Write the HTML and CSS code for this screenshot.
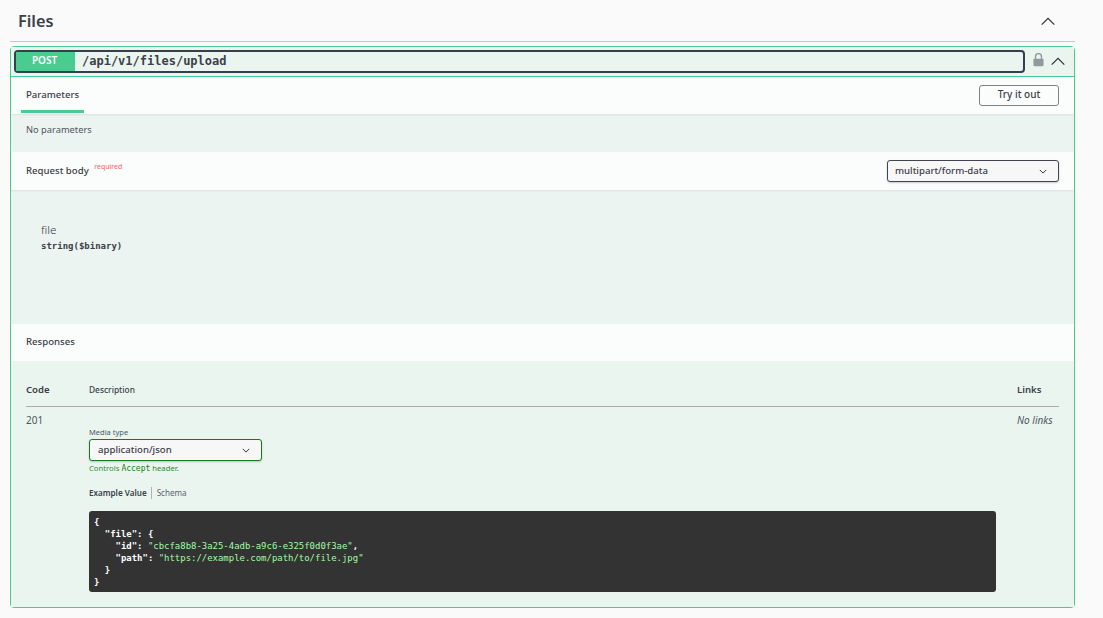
FILE: index.html
```html
<!DOCTYPE html>
<html lang="en">
<head>
<meta charset="utf-8">
<title>Files</title>
<link rel="stylesheet" href="styles.css">
</head>
<body>
<main class="page">
  <header class="tag">
    <h3 class="tag-title">Files</h3>
    <svg class="chev chev-tag" viewBox="0 0 20 20"><path d="M3 14 L10 7 L17 14"/></svg>
  </header>
  <section class="op">
    <div class="summary">
      <div class="summary-btn">
        <span class="method">POST</span>
        <span class="path">/api/v1/files/upload</span>
      </div>
      <svg class="lock" viewBox="0 0 14 18"><path class="lock-body" d="M1.5 7.5h11a1 1 0 0 1 1 1v7a1.6 1.6 0 0 1-1.6 1.6H2.1A1.6 1.6 0 0 1 .5 15.500v-7a1 1 0 0 1 1-1z"/><path class="lock-shackle" d="M3.200 8V4.600a3.800 3.800 0 0 1 7.600 0V8"/></svg>
      <svg class="chev chev-op" viewBox="0 0 20 20"><path d="M3 14 L10 7 L17 14"/></svg>
    </div>
    <div class="bar bar-params">
      <div class="tab">Parameters</div>
      <button class="try">Try it out</button>
    </div>
    <div class="no-params">No parameters</div>
    <div class="bar bar-body">
      <div class="body-label">Request body <sup class="req">required</sup></div>
      <div class="select select-body">multipart/form-data
        <svg class="sel-chev" viewBox="0 0 10 6"><path d="M1 1 L5 5 L9 1"/></svg>
      </div>
    </div>
    <div class="body-content">
      <div class="prop-name">file</div>
      <div class="prop-type">string($binary)</div>
    </div>
    <div class="bar bar-resp">Responses</div>
    <div class="responses">
      <div class="resp-head">
        <div class="col-code head-strong">Code</div>
        <div class="col-desc head-small">Description</div>
        <div class="col-links head-strong">Links</div>
      </div>
      <div class="resp-row">
        <div class="col-code code-val">201</div>
        <div class="col-desc">
          <div class="media-label">Media type</div>
          <div class="select select-media">application/json
            <svg class="sel-chev" viewBox="0 0 10 6"><path d="M1 1 L5 5 L9 1"/></svg>
          </div>
          <div class="controls">Controls <code class="accept">Accept</code> header.</div>
          <div class="example-tabs"><span class="ex-on">Example Value</span><span class="ex-off">Schema</span></div>
          <pre class="json">{
  "file": {
    "id": <span class="str">"cbcfa8b8-3a25-4adb-a9c6-e325f0d0f3ae"</span>,
    "path": <span class="str">"https://example.com/path/to/file.jpg"</span>
  }
}</pre>
        </div>
        <div class="col-links no-links">No links</div>
      </div>
    </div>
  </section>
</main>
</body>
</html>
```
FILE: styles.css
```css
* { box-sizing: border-box; }
html, body { margin: 0; height: 100%; }
body {
  background: #fafafa;
  font-family: "Noto Sans", "Noto Sans CJK KR", sans-serif;
  color: #3b4049;
  overflow: hidden;
}
.page { width: 1065px; margin-left: 10px; }
.tag {
  height: 42px;
  border-bottom: 1px solid #c3c8ce;
  display: flex;
  align-items: center;
  justify-content: space-between;
  padding: 0 18px 0 8px;
}
.tag-title { margin: 0; font-size: 16.300px; font-weight: 600; line-height: 22px; }
.chev { fill: none; stroke: #2b2f36; stroke-width: 1.3; display: block; }
.chev-tag { width: 18px; height: 18px; }
.op {
  margin-top: 4px;
  height: 562px;
  border: 1px solid #49cc90;
  border-radius: 4px;
  background: #ebf4f0;
  display: flex;
  flex-direction: column;
}
.summary {
  height: 30px;
  flex: none;
  border-bottom: 1px solid #49cc90;
  display: flex;
  align-items: center;
  padding: 0 7px 0 3px;
  background: #ebf5f0;
}
.summary-btn {
  width: 1011px;
  height: 23px;
  border: 2px solid #36404c;
  border-radius: 4px;
  display: flex;
  align-items: center;
  flex: none;
  overflow: hidden;
}
.method {
  width: 59px;
  height: 100%;
  background: #49cc90;
  color: #fff;
  font-size: 10px;
  font-weight: 600;
  text-align: center;
  line-height: 17px;
  padding-right: 2px;
  flex: none;
}
.path {
  margin-left: 7px;
  margin-bottom: 2px;
  font-family: "DejaVu Sans Mono", monospace;
  font-size: 12px;
  font-weight: 700;
  color: #3b4049;
}
.lock { width: 11px; height: 14px; margin-left: 8px; margin-bottom: 3px; flex: none; }
.lock-body { fill: #8f9a9a; }
.lock-shackle { fill: none; stroke: #8f9a9a; stroke-width: 1.8; }
.chev-op { width: 18px; height: 18px; margin-left: 5px; margin-bottom: 2px; flex: none; }
.bar {
  background: #fbfdfc;
  display: flex;
  justify-content: space-between;
  flex: none;
  box-shadow: 0 1px 2px rgba(0, 0, 0, .08);
  padding-left: 15px;
  padding-right: 15px;
  font-size: 9.600px;
  font-weight: 500;
}
.bar-params { height: 37px; padding-left: 10px; }
.tab {
  width: 63px;
  height: 36px;
  border-bottom: 3px solid #49cc90;
  padding-left: 5px;
  line-height: 35px;
}
.try {
  margin-top: 8px;
  width: 80px;
  height: 21px;
  background: transparent;
  border: 1px solid #7d8084;
  border-radius: 3px;
  font: 500 10px "Noto Sans", sans-serif;
  color: #3b4049;
  padding: 0 0 3px;
}
.no-params {
  height: 38px;
  flex: none;
  padding: 9px 15px 0;
  font-size: 9.300px;
  line-height: 14px;
  color: #4f555e;
}
.bar-body { height: 38px; align-items: center; }
.body-label { line-height: 14px; padding-bottom: 1px; }
.req { color: #f93e3e; font-size: 7px; font-weight: 400; opacity: .8; position: relative; top: 0; vertical-align: super; line-height: 0; margin-left: 3px; }
.select {
  position: relative;
  height: 22px;
  border: 1px solid #41444e;
  border-radius: 3px;
  background: #f7f7f7;
  box-shadow: 0 1px 2px rgba(0, 0, 0, .2);
  padding-left: 7px;
  font-size: 9.600px;
  font-weight: 500;
  line-height: 20px;
  color: #3b4049;
}
.select-body { width: 172px; }
.sel-chev {
  position: absolute;
  width: 8px;
  height: 5px;
  right: 11px;
  top: 8px;
  fill: none;
  stroke: #2b2f36;
  stroke-width: 1.200;
}
.body-content { height: 134px; flex: none; padding: 33px 30px 0; }
.prop-name { font-size: 11.500px; font-weight: 300; line-height: 14px; color: #33383f; }
.prop-type {
  margin-top: 3px;
  font-family: "DejaVu Sans Mono", monospace;
  font-size: 9px;
  font-weight: 700;
  line-height: 13px;
}
.bar-resp { height: 37px; align-items: center; padding-bottom: 2px; }
.responses { padding: 21px 15px 0; flex: 1; background: #eaf5f0; }
.resp-head { display: flex; height: 25px; border-bottom: 1px solid #a9adb0; align-items: center; padding-bottom: 9px; }
.col-code { width: 63px; flex: none; }
.col-desc { width: 907px; flex: none; }
.col-links { margin-left: 21px; flex: none; }
.head-strong { font-size: 9.600px; font-weight: 600; }
.head-small { font-size: 8.400px; font-weight: 500; }
.resp-row { display: flex; padding-top: 6px; }
.code-val { font-size: 10px; line-height: 14px; color: #4f555e; }
.no-links { font-size: 10px; font-style: italic; line-height: 14px; color: #4f555e; }
.media-label { margin-top: 13px; font-size: 7.500px; line-height: 12px; color: #4f555e; }
.select-media {
  margin-top: 1px;
  width: 173px;
  height: 22px;
  border: 1px solid #137d13;
  padding-left: 8px;
}
.controls { margin-top: 1px; font-size: 7.700px; line-height: 12px; color: #2e8b2e; }
.accept { font-family: "DejaVu Sans Mono", monospace; font-size: 8px; font-weight: 400; color: #1f7a1f; }
.example-tabs { margin-top: 12px; font-size: 8.100px; line-height: 12px; display: flex; }
.ex-on { font-weight: 600; padding-right: 4px; border-right: 1px solid #b0b3b8; }
.ex-off { padding-left: 5px; color: #5d6370; }
.json {
  margin: 12px 0 0;
  width: 907px;
  height: 81px;
  background: #333;
  border-radius: 3px;
  padding: 5px;
  font-family: "DejaVu Sans Mono", monospace;
  font-size: 8.960px;
  font-weight: 700;
  line-height: 12px;
  color: #fff;
}
.str { color: #a2fca2; font-weight: 400; }
```
